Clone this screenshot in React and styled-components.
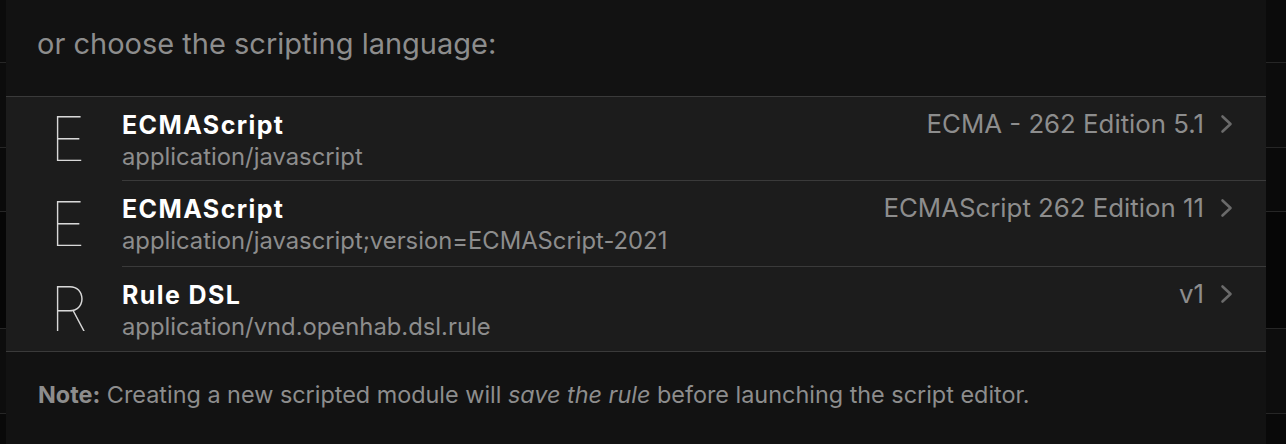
import React from "react";
import styled, { createGlobalStyle } from "styled-components";

const Global = createGlobalStyle`
  html, body { margin: 0; padding: 0; background: #0a0a0a; }
  body { font-family: Inter, "Noto Sans", "Liberation Sans", sans-serif; -webkit-font-smoothing: antialiased; }
`;

const Page = styled.div`
  display: flex;
  height: 444px;
  overflow: hidden;
`;

const Backdrop = styled.div`
  width: ${(p) => p.$w}px;
  flex-shrink: 0;
  display: flex;
  flex-direction: column;
  background: #090909;
`;

const BackdropRow = styled.div`
  height: ${(p) => p.$h}px;
  flex-shrink: 0;
  background: ${(p) => p.$bg || "#0b0b0b"};
  border-bottom: 1px solid ${(p) => p.$line || "#262626"};
`;

const Panel = styled.div`
  width: 1260px;
  flex-shrink: 0;
  background: #121212;
  display: flex;
  flex-direction: column;
`;

const Header = styled.div`
  height: 96px;
  box-sizing: border-box;
  padding: 26px 31px 0;
  font-size: 29px;
  line-height: 36px;
  color: #8d8d8d;
`;

const List = styled.ul`
  list-style: none;
  margin: 0;
  padding: 0;
  background: #1c1c1c;
  border-top: 1px solid #3a3a3a;
  border-bottom: 1px solid #3a3a3a;
`;

const Item = styled.li`
  display: flex;
  align-items: stretch;
  height: ${(p) => p.$h}px;
`;

const Media = styled.div`
  width: 116px;
  flex-shrink: 0;
  display: flex;
  align-items: center;
  padding-left: 44px;
  box-sizing: border-box;
  font-weight: 100;
  font-size: 61px;
  color: #d8d8d8;
  line-height: 1;
`;

const Inner = styled.div`
  flex: 1;
  display: flex;
  align-items: flex-start;
  box-sizing: border-box;
  padding: 11px 33px 0 0;
  border-bottom: ${(p) => (p.$last ? "none" : "1px solid #3a3a3a")};
`;

const Texts = styled.div`
  flex: 1;
  display: flex;
  flex-direction: column;
`;

const Title = styled.div`
  margin-top: 1px;
  font-size: 25px;
  font-weight: 700;
  letter-spacing: 1.4px;
  color: #ffffff;
  line-height: 32px;
`;

const Subtitle = styled.div`
  margin-top: 2px;
  font-size: 23.8px;
  color: #8d8d8d;
  line-height: 28px;
`;

const After = styled.div`
  display: flex;
  align-items: center;
  gap: 16px;
  font-size: 25.8px;
  line-height: 32px;
  color: #8d8d8d;
`;

const Chevron = styled.svg`
  width: 13px;
  height: 20px;
  display: block;
`;

const Footer = styled.div`
  flex: 1;
  padding: 29px 32px 0;
  font-size: 23.4px;
  line-height: 28px;
  color: #8d8d8d;
`;

const rows = [
  { letter: "E", title: "ECMAScript", sub: "application/javascript", after: "ECMA - 262 Edition 5.1", h: 84 },
  { letter: "E", title: "ECMAScript", sub: "application/javascript;version=ECMAScript-2021", after: "ECMAScript 262 Edition 11", h: 86 },
  { letter: "R", title: "Rule DSL", sub: "application/vnd.openhab.dsl.rule", after: "v1", h: 84 },
];

const backdropRows = [
  { h: 62, bg: "#0b0b0b" },
  { h: 84, bg: "#0c0c0c" },
  { h: 63, bg: "#0a0a0a" },
  { h: 116, bg: "#060606" },
  { h: 84, bg: "#0d0d0d" },
];

function BackdropColumn({ w }) {
  return (
    <Backdrop $w={w}>
      {backdropRows.map((r, i) => (
        <BackdropRow key={i} $h={r.h} $bg={r.bg} />
      ))}
    </Backdrop>
  );
}

export default function App() {
  return (
    <>
      <Global />
      <Page>
        <BackdropColumn w={6} />
        <Panel>
          <Header>or choose the scripting language:</Header>
          <List>
            {rows.map((r, i) => (
              <Item key={i} $h={r.h}>
                <Media>{r.letter}</Media>
                <Inner $last={i === rows.length - 1}>
                  <Texts>
                    <Title>{r.title}</Title>
                    <Subtitle>{r.sub}</Subtitle>
                  </Texts>
                  <After>
                    <span>{r.after}</span>
                    <Chevron viewBox="0 0 13 20">
                      <path d="M2.5 2.5 L10.5 10 L2.5 17.5" fill="none" stroke="#6a6a6a" strokeWidth="2.6" strokeLinecap="round" strokeLinejoin="round" />
                    </Chevron>
                  </After>
                </Inner>
              </Item>
            ))}
          </List>
          <Footer>
            <b>Note:</b> Creating a new scripted module will <i>save the rule</i> before launching the script editor.
          </Footer>
        </Panel>
        <BackdropColumn w={20} />
      </Page>
    </>
  );
}
